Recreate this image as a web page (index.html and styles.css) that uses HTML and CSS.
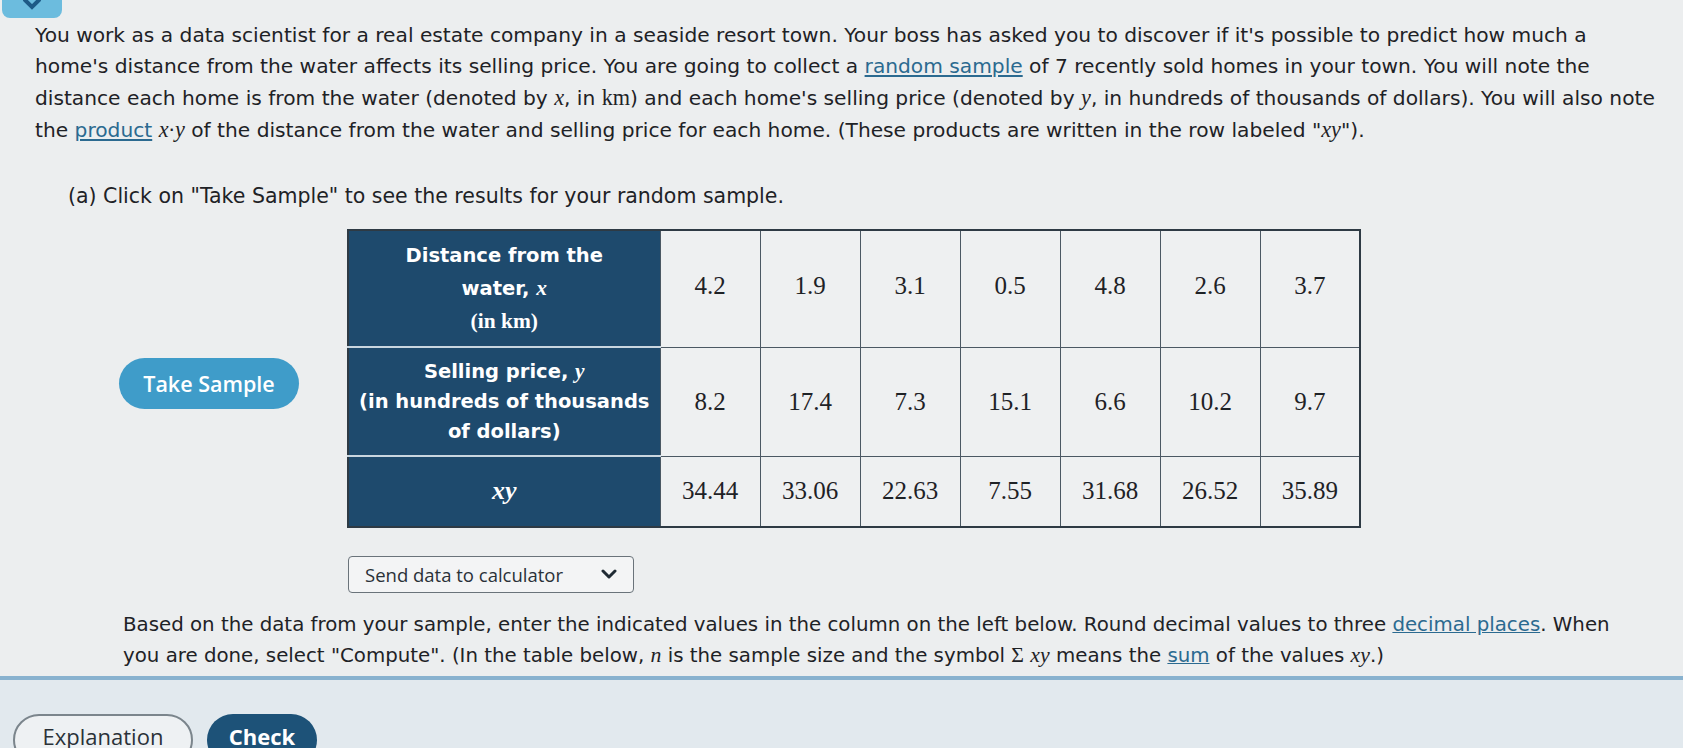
FILE: index.html
```html
<!DOCTYPE html>
<html lang="en">
<head>
    <meta charset="UTF-8">
    <title>Take Sample</title>
    <link rel="stylesheet" href="styles.css">
</head>
<body>
    <div class="collapse-tab">
        <svg width="22" height="12" viewBox="0 0 22 12"><path d="M4 0 L11 7 L18 0" fill="none" stroke="#1d5a86" stroke-width="4" stroke-linecap="round"/></svg>
    </div>

    <div class="page">
        <p class="intro">
            You work as a data scientist for a real estate company in a seaside resort town. Your boss has asked you to discover if it's possible to predict how much a<br>
            home's distance from the water affects its selling price. You are going to collect a <a href="#">random sample</a> of 7 recently sold homes in your town. You will note the<br>
            distance each home is from the water (denoted by <i class="m">x</i>, in <span class="m">km</span>) and each home's selling price (denoted by <i class="m">y</i>, in hundreds of thousands of dollars). You will also note<br>
            the <a href="#">product</a> <i class="m">x</i>·<i class="m">y</i> of the distance from the water and selling price for each home. (These products are written in the row labeled "<i class="m">xy</i>").
        </p>

        <p class="step">(a) Click on "Take Sample" to see the results for your random sample.</p>

        <div class="sample-row">
            <button class="take-btn">Take Sample</button>
            <table class="data-table">
                <tr class="row-x">
                    <th>Distance from the<br>water, <i class="m">x</i><br><span class="m">(in km)</span></th>
                    <td>4.2</td><td>1.9</td><td>3.1</td><td>0.5</td><td>4.8</td><td>2.6</td><td>3.7</td>
                </tr>
                <tr class="row-y">
                    <th>Selling price, <i class="m">y</i><br>(in hundreds of thousands<br>of dollars)</th>
                    <td>8.2</td><td>17.4</td><td>7.3</td><td>15.1</td><td>6.6</td><td>10.2</td><td>9.7</td>
                </tr>
                <tr class="row-xy">
                    <th><i class="m">xy</i></th>
                    <td>34.44</td><td>33.06</td><td>22.63</td><td>7.55</td><td>31.68</td><td>26.52</td><td>35.89</td>
                </tr>
            </table>
        </div>

        <div class="calc-select">
            <span>Send data to calculator</span>
            <svg width="16" height="11" viewBox="0 0 16 11"><path d="M2 2 L8 8 L14 2" fill="none" stroke="#1f2a33" stroke-width="3" stroke-linecap="round" stroke-linejoin="round"/></svg>
        </div>

        <p class="instructions">
            Based on the data from your sample, enter the indicated values in the column on the left below. Round decimal values to three <a href="#">decimal places</a>. When<br>
            you are done, select "Compute". (In the table below, <i class="m">n</i> is the sample size and the symbol <span class="m">Σ</span> <i class="m">xy</i> means the <a href="#">sum</a> of the values <i class="m">xy</i>.)
        </p>
    </div>

    <div class="footer">
        <button class="btn-outline">Explanation</button>
        <button class="btn-check">Check</button>
    </div>
</body>
</html>
```

FILE: styles.css
```css
* {
    box-sizing: border-box;
    margin: 0;
    padding: 0;
}

body {
    font-family: "DejaVu Sans", Verdana, sans-serif;
    background-color: #eceeef;
    color: #1e2226;
    width: 1683px;
    height: 748px;
    overflow: hidden;
    position: relative;
}

.collapse-tab {
    position: absolute;
    left: 2px;
    top: -30px;
    width: 60px;
    height: 48px;
    background-color: #6cbcde;
    border-radius: 8px;
    display: flex;
    align-items: flex-end;
    justify-content: center;
    padding-bottom: 6px;
}

.page {
    padding: 20px 0 0 35px;
    height: 676px;
}

.intro {
    font-size: 20.2px;
    line-height: 31px;
    white-space: nowrap;
}

a {
    color: #2b6a90;
    text-decoration: underline;
}

.m {
    font-family: "Liberation Serif", "Times New Roman", serif;
    font-size: 1.1em;
}

.step {
    font-size: 20.5px;
    line-height: 31px;
    margin: 35px 0 0 33px;
}

.sample-row {
    display: flex;
    align-items: center;
    margin-top: 17px;
}

.take-btn {
    width: 180px;
    height: 51px;
    margin: 10px 48px 0 84px;
    border: none;
    border-radius: 26px;
    background-color: #3f9cc9;
    color: #ffffff;
    font-family: "Open Sans", Arial, sans-serif;
    font-size: 21.5px;
    font-weight: 600;
}

.data-table {
    border-collapse: collapse;
    border: 2px solid #2e3a44;
    background-color: #eef0f1;
}

.data-table th {
    width: 312px;
    padding: 0 2px;
    background-color: #1e4a6d;
    color: #ffffff;
    font-size: 19.5px;
    font-weight: 700;
    line-height: 30px;
    border-bottom: 2px solid #c9d6e0;
}

.data-table td {
    width: 100px;
    border: 1px solid #4b5863;
    text-align: center;
    font-family: "Liberation Serif", "Times New Roman", serif;
    font-size: 25px;
}

.row-x th {
    line-height: 33px;
}

.row-x td {
    padding-bottom: 6px;
}

.row-x {
    height: 117px;
}

.row-y {
    height: 109px;
}

.row-xy {
    height: 71px;
}

.row-xy th {
    border-bottom: none;
}

.row-xy th .m {
    font-size: 26px;
}

.calc-select {
    width: 286px;
    height: 37px;
    margin: 28px 0 0 313px;
    border: 1px solid #6a737a;
    border-radius: 4px;
    background-color: #f3f4f5;
    display: flex;
    align-items: center;
    justify-content: space-between;
    padding: 0 16px 0 16px;
    font-family: "Open Sans", Arial, sans-serif;
    font-size: 18.5px;
    color: #2a3138;
}

.instructions {
    font-size: 19.8px;
    line-height: 31px;
    white-space: nowrap;
    margin: 16px 0 0 88px;
}

.footer {
    height: 72px;
    background-color: #e2e9ee;
    border-top: 4px solid #89b2cf;
    display: flex;
    gap: 14px;
    padding: 34px 0 0 13px;
}

.footer button {
    height: 52px;
    border-radius: 26px;
    font-family: "Open Sans", Arial, sans-serif;
    font-size: 22px;
    padding-bottom: 8px;
}

.btn-outline {
    width: 180px;
    border: 2px solid #7b858c;
    background-color: #eef1f3;
    color: #2a3138;
}

.btn-check {
    width: 110px;
    border: none;
    background-color: #1d5278;
    color: #ffffff;
    font-weight: 700;
}
```
